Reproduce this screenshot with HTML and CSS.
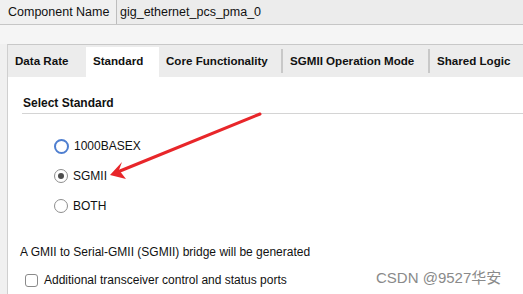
FILE: index.html
```html
<!DOCTYPE html>
<html>
<head>
<meta charset="utf-8">
<link rel="stylesheet" href="styles.css">
</head>
<body>
<div class="page">
  <div class="header">
    <div class="label">Component Name</div>
    <div class="field">gig_ethernet_pcs_pma_0</div>
  </div>
  <div class="strip"></div>
  <div class="panel">
    <div class="tabs">
      <div class="tab t-rate">Data Rate</div>
      <div class="tab t-std selected">Standard</div>
      <div class="tab t-core sep">Core Functionality</div>
      <div class="tab t-sgmii sep">SGMII Operation Mode</div>
      <div class="tab t-shared">Shared Logic</div>
    </div>
    <div class="content">
      <div class="section-title">Select Standard</div>
      <div class="radios">
        <div class="radio-row"><span class="radio focus"></span><span>1000BASEX</span></div>
        <div class="radio-row"><span class="radio checked"></span><span>SGMII</span></div>
        <div class="radio-row"><span class="radio"></span><span>BOTH</span></div>
      </div>
      <div class="desc">A GMII to Serial-GMII (SGMII) bridge will be generated</div>
      <div class="check-row"><span class="checkbox"></span><span>Additional transceiver control and status ports</span></div>
    </div>
  </div>
  <svg class="arrow" width="523" height="294" viewBox="0 0 523 294">
    <line x1="260" y1="114" x2="120" y2="171" stroke="#e8262a" stroke-width="3" stroke-linecap="round"/>
    <polygon points="110,175 122,162 119,170 126,179" fill="#e8262a"/>
  </svg>
  <div class="watermark">CSDN @9527华安</div>
</div>
</body>
</html>
```
FILE: styles.css
```css
html, body {
  margin: 0;
  padding: 0;
}
body {
  background: #f0f0f0;
  font-family: "Liberation Sans", Arial, sans-serif;
  color: #111;
  width: 523px;
  height: 294px;
  overflow: hidden;
}
.page {
  position: relative;
  width: 523px;
  height: 294px;
  display: flex;
  flex-direction: column;
}
.header {
  display: flex;
  height: 24px;
  border-bottom: 1px solid #c6c6c6;
}
.label {
  width: 108px;
  padding-left: 8px;
  font-size: 12.5px;
  line-height: 24px;
  white-space: nowrap;
}
.field {
  flex: 1;
  background: #ececec;
  border-left: 1px solid #bdbdbd;
  padding-left: 3px;
  font-size: 12.5px;
  line-height: 24px;
}
.strip {
  height: 19px;
  background: #f5f5f5;
}
.panel {
  flex: 1;
  margin-left: 7px;
  border-left: 1px solid #cfcfcf;
  border-top: 1px solid #c8c8c8;
  display: flex;
  flex-direction: column;
  min-height: 0;
}
.tabs {
  display: flex;
  height: 32px;
  flex-shrink: 0;
  background: #ececec;
  align-items: flex-end;
  overflow: hidden;
}
.tab {
  flex-shrink: 0;
  white-space: nowrap;
  height: 30px;
  padding-left: 7px;
  font-size: 11.6px;
  font-weight: bold;
  line-height: 28px;
  color: #111;
  box-sizing: border-box;
  position: relative;
}
.t-rate { width: 78px; }
.t-std { width: 73px; }
.t-core { width: 124px; }
.t-sgmii { width: 147px; }
.t-shared { flex: 1; }
.tab.selected {
  background: #ffffff;
}
.tab.sep::after {
  content: "";
  position: absolute;
  right: 0;
  top: 2px;
  bottom: 4px;
  width: 2px;
  background: #c8c8c8;
}
.content {
  flex: 1;
  background: #ffffff;
  padding: 19px 0 0 12px;
  font-size: 12px;
}
.section-title {
  font-weight: bold;
  line-height: 14px;
  padding: 0 0 3px 1px;
  margin-left: 2px;
  border-bottom: 1px solid #d4d4d4;
  white-space: nowrap;
}
.radios {
  margin-top: 17px;
  margin-left: 34px;
  display: flex;
  flex-direction: column;
}
.radio-row {
  height: 30px;
  display: flex;
  align-items: center;
  gap: 5px;
  color: #111;
}
.radio {
  width: 14px;
  height: 14px;
  box-sizing: border-box;
  border-radius: 50%;
  border: 1px solid #8e8e8e;
  background: #fff;
  display: flex;
  align-items: center;
  justify-content: center;
}
.radio.focus {
  width: 15px;
  height: 15px;
  border: 2px solid #4f7fd0;
}
.radio.checked::before {
  content: "";
  width: 6px;
  height: 6px;
  border-radius: 50%;
  background: #4d4d4d;
}
.desc {
  margin-top: 24px;
  line-height: 14px;
  white-space: nowrap;
}
.check-row {
  margin-top: 12px;
  margin-left: 5px;
  height: 18px;
  display: flex;
  align-items: center;
  gap: 6px;
  white-space: nowrap;
}
.checkbox {
  width: 13px;
  height: 13px;
  box-sizing: border-box;
  border: 1px solid #8a8a8a;
  border-radius: 3px;
  background: #fff;
}
.arrow {
  position: absolute;
  left: 0;
  top: 0;
  pointer-events: none;
}
.watermark {
  position: absolute;
  left: 376px;
  top: 268px;
  font-family: "Liberation Sans", "Noto Sans CJK SC", sans-serif;
  font-size: 15px;
  line-height: 20px;
  color: #8a8a8a;
  white-space: nowrap;
}
```
